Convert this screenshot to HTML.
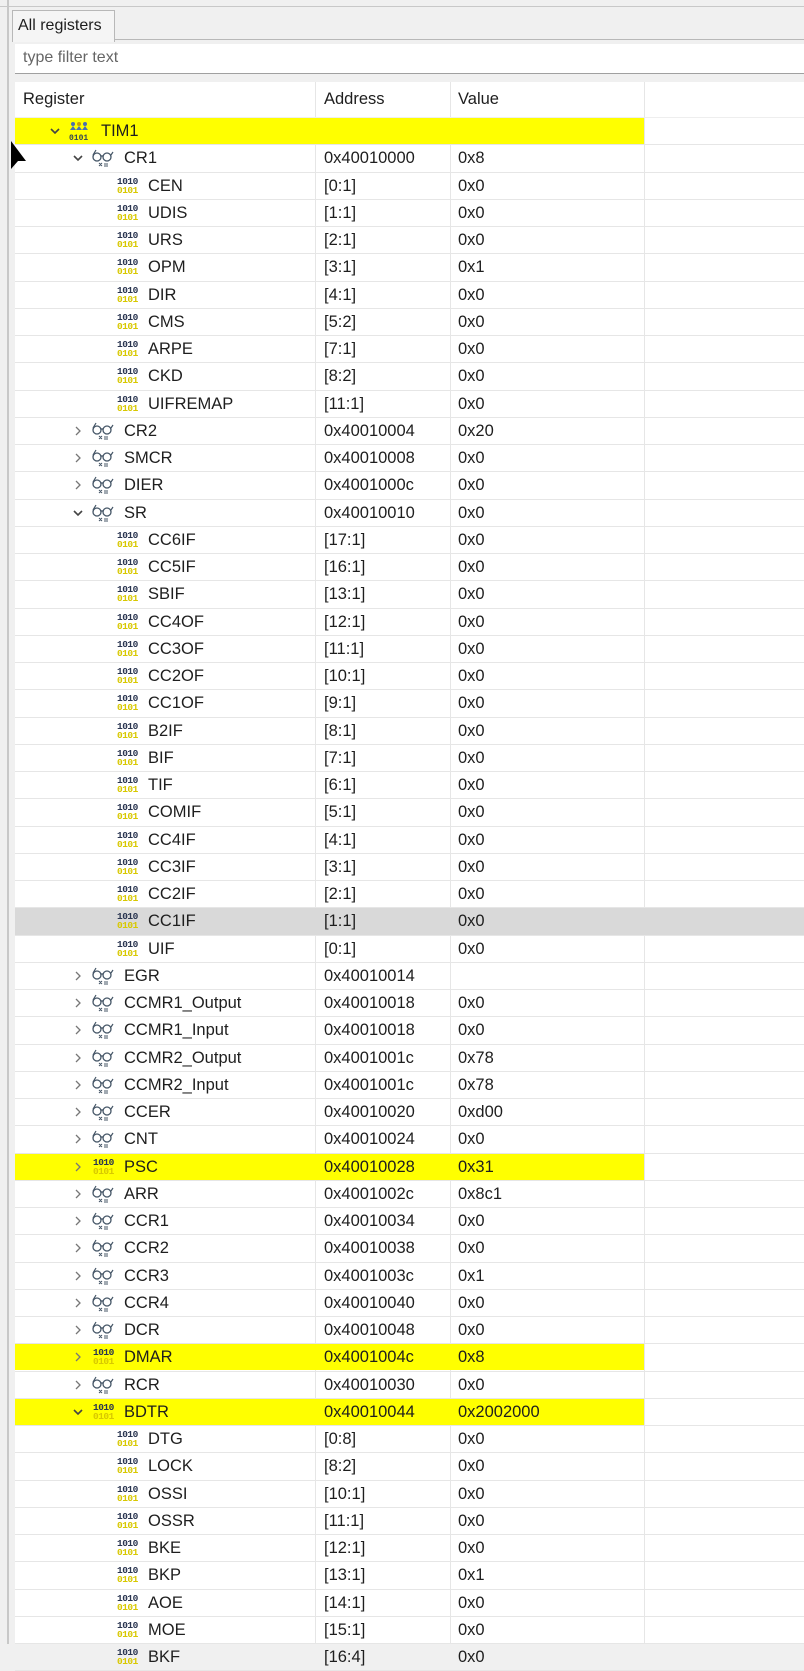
<!DOCTYPE html>
<html><head><style>
*{margin:0;padding:0;box-sizing:border-box}
body{width:804px;height:1644px;background:#f0f0f0;font-family:"Liberation Sans",sans-serif;font-size:16.5px;color:#1e1e1e;position:relative;overflow:hidden}
.top{position:absolute;left:0;top:0;width:804px;height:7px;background:#f0f0f0;border-bottom:1px solid #c8c8c8}
.lb{position:absolute;left:7px;top:0;width:2px;height:1644px;background:#c8c8c8}
.tab{position:absolute;left:12px;top:10px;width:103px;height:32px;background:#f5f5f5;border:1px solid #b8b8b8;border-bottom:none;padding:6px 0 0 5px;font-size:16px}
.tabline{position:absolute;left:114px;top:39px;width:690px;height:1px;background:#b8b8b8}
.filter{position:absolute;left:15px;top:44px;width:789px;height:30px;background:#fff;border-bottom:1px solid #a0a0a0;color:#666;padding:5px 0 0 8px;font-size:16px}
.tbl{position:absolute;left:15px;top:82px;width:789px;background:#fff;height:1562px}
.hd{height:36px;position:relative;border-bottom:1px solid #eee}
.hd span{position:absolute;top:8px}
.r{height:27.25px;position:relative;border-bottom:1px solid #e6e6e6}
.r span{position:absolute;top:4px;white-space:nowrap}
.v1{position:absolute;left:300px;top:0;width:1px;height:1562px;background:#e6e6e6}
.v2{position:absolute;left:435px;top:0;width:1px;height:1562px;background:#e6e6e6}
.v3{position:absolute;left:629px;top:0;width:1px;height:1562px;background:#e6e6e6}
.y{position:absolute;left:0;top:0;width:629px;height:26px;background:#ffff00}
.g{background:#d9d9d9}
.r .ad{left:309px}.r .vl{left:443px}
.r .n1{left:109px}.r .n2{left:133px}
.ch{position:absolute;top:8px;width:10px;height:10px}
.ch0{left:35px}.ch1{left:58px}
.gi{position:absolute;left:76px;top:3px}
.fi{position:absolute;top:4px;font-size:9.5px;line-height:9px;font-weight:bold;font-family:"Liberation Mono",monospace;color:#2a3550;letter-spacing:-0.5px}
.fi i{font-style:normal;display:block}
.fi i+i{color:#d8c800}
.f2{left:102px}.f1{left:78px}
</style></head><body>
<div class="top"></div>
<div class="lb"></div>
<div class="tab">All registers</div>
<div class="tabline"></div>
<div class="filter">type filter text</div>
<div class="tbl">
<div class="v1"></div><div class="v2"></div><div class="v3"></div>
<div class="hd"><span style="left:8px">Register</span><span style="left:309px">Address</span><span style="left:443px">Value</span></div>
<svg width="0" height="0" style="position:absolute"><defs>
<symbol id="dn" viewBox="0 0 10 10"><path d="M1 3l4 4 4-4" fill="none" stroke="#444" stroke-width="1.6"/></symbol>
<symbol id="rt" viewBox="0 0 10 10"><path d="M3 1l4 4-4 4" fill="none" stroke="#777" stroke-width="1.3"/></symbol>
<symbol id="gl" viewBox="0 0 24 20"><circle cx="6" cy="9" r="4" fill="none" stroke="#456" stroke-width="1.3"/><circle cx="16" cy="9" r="4" fill="none" stroke="#456" stroke-width="1.3"/><path d="M10 8h2M2 7l3-5M20 7l2-3" stroke="#456" stroke-width="1.2" fill="none"/><path d="M8 15l3 3M11 15l-3 3M13 16h4M13 18h4" stroke="#456" stroke-width="1"/></symbol>
<symbol id="tm" viewBox="0 0 20 20"><circle cx="4" cy="3" r="2" fill="#4a6fb0"/><circle cx="10" cy="3" r="2" fill="#c8a000"/><circle cx="16" cy="3" r="2" fill="#4a6fb0"/><path d="M1 9l3-4 3 4zM7 9l3-4 3 4zM13 9l3-4 3 4z" fill="#4a6fb0"/><text x="0" y="19" font-size="8" font-family="Liberation Mono" font-weight="bold" fill="#345">0101</text></symbol>
</defs></svg>
<div class="r"><div class="y"></div><svg class="ch ch0"><use href="#dn"/></svg><svg style="position:absolute;left:54px;top:3px" width="20" height="20"><use href="#tm"/></svg><span style="left:86px">TIM1</span></div>
<div class="r"><svg class="ch ch1"><use href="#dn"/></svg><svg class="gi" width="24" height="20"><use href="#gl"/></svg><span class="n1">CR1</span><span class="ad">0x40010000</span><span class="vl">0x8</span></div>
<div class="r"><div class="fi f2"><i>1010</i><i>0101</i></div><span class="n2">CEN</span><span class="ad">[0:1]</span><span class="vl">0x0</span></div>
<div class="r"><div class="fi f2"><i>1010</i><i>0101</i></div><span class="n2">UDIS</span><span class="ad">[1:1]</span><span class="vl">0x0</span></div>
<div class="r"><div class="fi f2"><i>1010</i><i>0101</i></div><span class="n2">URS</span><span class="ad">[2:1]</span><span class="vl">0x0</span></div>
<div class="r"><div class="fi f2"><i>1010</i><i>0101</i></div><span class="n2">OPM</span><span class="ad">[3:1]</span><span class="vl">0x1</span></div>
<div class="r"><div class="fi f2"><i>1010</i><i>0101</i></div><span class="n2">DIR</span><span class="ad">[4:1]</span><span class="vl">0x0</span></div>
<div class="r"><div class="fi f2"><i>1010</i><i>0101</i></div><span class="n2">CMS</span><span class="ad">[5:2]</span><span class="vl">0x0</span></div>
<div class="r"><div class="fi f2"><i>1010</i><i>0101</i></div><span class="n2">ARPE</span><span class="ad">[7:1]</span><span class="vl">0x0</span></div>
<div class="r"><div class="fi f2"><i>1010</i><i>0101</i></div><span class="n2">CKD</span><span class="ad">[8:2]</span><span class="vl">0x0</span></div>
<div class="r"><div class="fi f2"><i>1010</i><i>0101</i></div><span class="n2">UIFREMAP</span><span class="ad">[11:1]</span><span class="vl">0x0</span></div>
<div class="r"><svg class="ch ch1"><use href="#rt"/></svg><svg class="gi" width="24" height="20"><use href="#gl"/></svg><span class="n1">CR2</span><span class="ad">0x40010004</span><span class="vl">0x20</span></div>
<div class="r"><svg class="ch ch1"><use href="#rt"/></svg><svg class="gi" width="24" height="20"><use href="#gl"/></svg><span class="n1">SMCR</span><span class="ad">0x40010008</span><span class="vl">0x0</span></div>
<div class="r"><svg class="ch ch1"><use href="#rt"/></svg><svg class="gi" width="24" height="20"><use href="#gl"/></svg><span class="n1">DIER</span><span class="ad">0x4001000c</span><span class="vl">0x0</span></div>
<div class="r"><svg class="ch ch1"><use href="#dn"/></svg><svg class="gi" width="24" height="20"><use href="#gl"/></svg><span class="n1">SR</span><span class="ad">0x40010010</span><span class="vl">0x0</span></div>
<div class="r"><div class="fi f2"><i>1010</i><i>0101</i></div><span class="n2">CC6IF</span><span class="ad">[17:1]</span><span class="vl">0x0</span></div>
<div class="r"><div class="fi f2"><i>1010</i><i>0101</i></div><span class="n2">CC5IF</span><span class="ad">[16:1]</span><span class="vl">0x0</span></div>
<div class="r"><div class="fi f2"><i>1010</i><i>0101</i></div><span class="n2">SBIF</span><span class="ad">[13:1]</span><span class="vl">0x0</span></div>
<div class="r"><div class="fi f2"><i>1010</i><i>0101</i></div><span class="n2">CC4OF</span><span class="ad">[12:1]</span><span class="vl">0x0</span></div>
<div class="r"><div class="fi f2"><i>1010</i><i>0101</i></div><span class="n2">CC3OF</span><span class="ad">[11:1]</span><span class="vl">0x0</span></div>
<div class="r"><div class="fi f2"><i>1010</i><i>0101</i></div><span class="n2">CC2OF</span><span class="ad">[10:1]</span><span class="vl">0x0</span></div>
<div class="r"><div class="fi f2"><i>1010</i><i>0101</i></div><span class="n2">CC1OF</span><span class="ad">[9:1]</span><span class="vl">0x0</span></div>
<div class="r"><div class="fi f2"><i>1010</i><i>0101</i></div><span class="n2">B2IF</span><span class="ad">[8:1]</span><span class="vl">0x0</span></div>
<div class="r"><div class="fi f2"><i>1010</i><i>0101</i></div><span class="n2">BIF</span><span class="ad">[7:1]</span><span class="vl">0x0</span></div>
<div class="r"><div class="fi f2"><i>1010</i><i>0101</i></div><span class="n2">TIF</span><span class="ad">[6:1]</span><span class="vl">0x0</span></div>
<div class="r"><div class="fi f2"><i>1010</i><i>0101</i></div><span class="n2">COMIF</span><span class="ad">[5:1]</span><span class="vl">0x0</span></div>
<div class="r"><div class="fi f2"><i>1010</i><i>0101</i></div><span class="n2">CC4IF</span><span class="ad">[4:1]</span><span class="vl">0x0</span></div>
<div class="r"><div class="fi f2"><i>1010</i><i>0101</i></div><span class="n2">CC3IF</span><span class="ad">[3:1]</span><span class="vl">0x0</span></div>
<div class="r"><div class="fi f2"><i>1010</i><i>0101</i></div><span class="n2">CC2IF</span><span class="ad">[2:1]</span><span class="vl">0x0</span></div>
<div class="r g"><div class="fi f2"><i>1010</i><i>0101</i></div><span class="n2">CC1IF</span><span class="ad">[1:1]</span><span class="vl">0x0</span></div>
<div class="r"><div class="fi f2"><i>1010</i><i>0101</i></div><span class="n2">UIF</span><span class="ad">[0:1]</span><span class="vl">0x0</span></div>
<div class="r"><svg class="ch ch1"><use href="#rt"/></svg><svg class="gi" width="24" height="20"><use href="#gl"/></svg><span class="n1">EGR</span><span class="ad">0x40010014</span></div>
<div class="r"><svg class="ch ch1"><use href="#rt"/></svg><svg class="gi" width="24" height="20"><use href="#gl"/></svg><span class="n1">CCMR1_Output</span><span class="ad">0x40010018</span><span class="vl">0x0</span></div>
<div class="r"><svg class="ch ch1"><use href="#rt"/></svg><svg class="gi" width="24" height="20"><use href="#gl"/></svg><span class="n1">CCMR1_Input</span><span class="ad">0x40010018</span><span class="vl">0x0</span></div>
<div class="r"><svg class="ch ch1"><use href="#rt"/></svg><svg class="gi" width="24" height="20"><use href="#gl"/></svg><span class="n1">CCMR2_Output</span><span class="ad">0x4001001c</span><span class="vl">0x78</span></div>
<div class="r"><svg class="ch ch1"><use href="#rt"/></svg><svg class="gi" width="24" height="20"><use href="#gl"/></svg><span class="n1">CCMR2_Input</span><span class="ad">0x4001001c</span><span class="vl">0x78</span></div>
<div class="r"><svg class="ch ch1"><use href="#rt"/></svg><svg class="gi" width="24" height="20"><use href="#gl"/></svg><span class="n1">CCER</span><span class="ad">0x40010020</span><span class="vl">0xd00</span></div>
<div class="r"><svg class="ch ch1"><use href="#rt"/></svg><svg class="gi" width="24" height="20"><use href="#gl"/></svg><span class="n1">CNT</span><span class="ad">0x40010024</span><span class="vl">0x0</span></div>
<div class="r"><div class="y"></div><svg class="ch ch1"><use href="#rt"/></svg><div class="fi f1"><i>1010</i><i>0101</i></div><span class="n1">PSC</span><span class="ad">0x40010028</span><span class="vl">0x31</span></div>
<div class="r"><svg class="ch ch1"><use href="#rt"/></svg><svg class="gi" width="24" height="20"><use href="#gl"/></svg><span class="n1">ARR</span><span class="ad">0x4001002c</span><span class="vl">0x8c1</span></div>
<div class="r"><svg class="ch ch1"><use href="#rt"/></svg><svg class="gi" width="24" height="20"><use href="#gl"/></svg><span class="n1">CCR1</span><span class="ad">0x40010034</span><span class="vl">0x0</span></div>
<div class="r"><svg class="ch ch1"><use href="#rt"/></svg><svg class="gi" width="24" height="20"><use href="#gl"/></svg><span class="n1">CCR2</span><span class="ad">0x40010038</span><span class="vl">0x0</span></div>
<div class="r"><svg class="ch ch1"><use href="#rt"/></svg><svg class="gi" width="24" height="20"><use href="#gl"/></svg><span class="n1">CCR3</span><span class="ad">0x4001003c</span><span class="vl">0x1</span></div>
<div class="r"><svg class="ch ch1"><use href="#rt"/></svg><svg class="gi" width="24" height="20"><use href="#gl"/></svg><span class="n1">CCR4</span><span class="ad">0x40010040</span><span class="vl">0x0</span></div>
<div class="r"><svg class="ch ch1"><use href="#rt"/></svg><svg class="gi" width="24" height="20"><use href="#gl"/></svg><span class="n1">DCR</span><span class="ad">0x40010048</span><span class="vl">0x0</span></div>
<div class="r"><div class="y"></div><svg class="ch ch1"><use href="#rt"/></svg><div class="fi f1"><i>1010</i><i>0101</i></div><span class="n1">DMAR</span><span class="ad">0x4001004c</span><span class="vl">0x8</span></div>
<div class="r"><svg class="ch ch1"><use href="#rt"/></svg><svg class="gi" width="24" height="20"><use href="#gl"/></svg><span class="n1">RCR</span><span class="ad">0x40010030</span><span class="vl">0x0</span></div>
<div class="r"><div class="y"></div><svg class="ch ch1"><use href="#dn"/></svg><div class="fi f1"><i>1010</i><i>0101</i></div><span class="n1">BDTR</span><span class="ad">0x40010044</span><span class="vl">0x2002000</span></div>
<div class="r"><div class="fi f2"><i>1010</i><i>0101</i></div><span class="n2">DTG</span><span class="ad">[0:8]</span><span class="vl">0x0</span></div>
<div class="r"><div class="fi f2"><i>1010</i><i>0101</i></div><span class="n2">LOCK</span><span class="ad">[8:2]</span><span class="vl">0x0</span></div>
<div class="r"><div class="fi f2"><i>1010</i><i>0101</i></div><span class="n2">OSSI</span><span class="ad">[10:1]</span><span class="vl">0x0</span></div>
<div class="r"><div class="fi f2"><i>1010</i><i>0101</i></div><span class="n2">OSSR</span><span class="ad">[11:1]</span><span class="vl">0x0</span></div>
<div class="r"><div class="fi f2"><i>1010</i><i>0101</i></div><span class="n2">BKE</span><span class="ad">[12:1]</span><span class="vl">0x0</span></div>
<div class="r"><div class="fi f2"><i>1010</i><i>0101</i></div><span class="n2">BKP</span><span class="ad">[13:1]</span><span class="vl">0x1</span></div>
<div class="r"><div class="fi f2"><i>1010</i><i>0101</i></div><span class="n2">AOE</span><span class="ad">[14:1]</span><span class="vl">0x0</span></div>
<div class="r"><div class="fi f2"><i>1010</i><i>0101</i></div><span class="n2">MOE</span><span class="ad">[15:1]</span><span class="vl">0x0</span></div>
<div class="r"><div class="fi f2"><i>1010</i><i>0101</i></div><span class="n2">BKF</span><span class="ad">[16:4]</span><span class="vl">0x0</span></div>
</div>
<svg style="position:absolute;left:10px;top:140px" width="22" height="32"><path d="M1 1v28l7-8 8 0z" fill="#000"/></svg>
</body></html>
